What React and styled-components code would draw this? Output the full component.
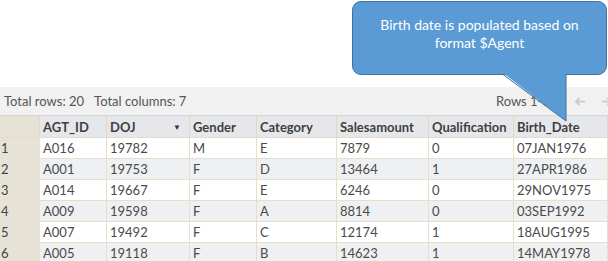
import React from 'react'
import styled, { createGlobalStyle } from 'styled-components'

const columns = [
  { key: 'id', label: 'AGT_ID', width: 67 },
  { key: 'doj', label: 'DOJ', width: 83, sorted: true },
  { key: 'gender', label: 'Gender', width: 67 },
  { key: 'cat', label: 'Category', width: 80 },
  { key: 'sales', label: 'Salesamount', width: 92 },
  { key: 'qual', label: 'Qualification', width: 85 },
  { key: 'birth', label: 'Birth_Date', width: 94 },
]

const rows = [
  ['A016', '19782', 'M', 'E', '7879', '0', '07JAN1976'],
  ['A001', '19753', 'F', 'D', '13464', '1', '27APR1986'],
  ['A014', '19667', 'F', 'E', '6246', '0', '29NOV1975'],
  ['A009', '19598', 'F', 'A', '8814', '0', '03SEP1992'],
  ['A007', '19492', 'F', 'C', '12174', '1', '18AUG1995'],
  ['A005', '19118', 'F', 'B', '14623', '1', '14MAY1978'],
]

const GlobalStyle = createGlobalStyle`
  body {
    margin: 0;
    background: #fff;
    font-family: Lato, "Open Sans", sans-serif;
  }
`

const App = () => {
  return (
    <Page>
      <GlobalStyle />
      <Spacer />
      <Toolbar>
        <Totals>
          <span>Total rows: 20</span>
          <span>Total columns: 7</span>
        </Totals>
        <Pager>
          <PagerLabel>Rows 1-6</PagerLabel>
          <ArrowIcon viewBox="0 0 12 10">
            <path d="M5 1 L1 5 L5 9 M1 5 H11" fill="none" stroke="#c9cdd2" strokeWidth="2.2" />
          </ArrowIcon>
          <ArrowIcon viewBox="0 0 12 10">
            <path d="M7 1 L11 5 L7 9 M11 5 H1" fill="none" stroke="#c9cdd2" strokeWidth="2.2" />
          </ArrowIcon>
        </Pager>
      </Toolbar>
      <Grid>
        <HeadCell $corner />
        {columns.map((c) => (
          <HeadCell key={c.key}>
            {c.label}
            {c.sorted && <SortMark>▼</SortMark>}
          </HeadCell>
        ))}
        {rows.map((r, i) => (
          <React.Fragment key={i}>
            <RowNum>{i + 1}</RowNum>
            {r.map((v, j) => (
              <Cell key={j} $odd={i % 2 === 1}>{v}</Cell>
            ))}
          </React.Fragment>
        ))}
      </Grid>
      <Callout>
        <CalloutBox>
          Birth date is populated based on
          <br />
          format $Agent
        </CalloutBox>
        <Tail width="68" height="52" viewBox="0 0 68 52">
          <polygon points="2,0 65,48 65,0" fill="#5b9bd5" />
          <polyline points="2,1.5 65,48 65,1.5" fill="none" stroke="#41719c" strokeWidth="1" />
        </Tail>
      </Callout>
    </Page>
  )
}

const Page = styled.div`
  position: relative;
  width: 608px;
  height: 261px;
  overflow: hidden;
  background: #fff;
  color: #444;
`

const Spacer = styled.div`
  height: 87px;
`

const Toolbar = styled.div`
  height: 28px;
  background: #f1f1f1;
  display: flex;
  align-items: center;
  justify-content: space-between;
  padding: 0 0 0 4px;
  font-size: 13px;
  color: #555;
`

const Totals = styled.div`
  display: flex;
  gap: 10px;
`

const Pager = styled.div`
  display: flex;
  align-items: center;
  gap: 15px;
  margin-right: -4px;
`

const PagerLabel = styled.span`
  margin-right: 10px;
`

const ArrowIcon = styled.svg`
  width: 11px;
  height: 9px;
`

const Grid = styled.div`
  display: grid;
  grid-template-columns: 40px ${columns.map((c) => c.width + 'px').join(' ')};
  grid-auto-rows: 21px;
  grid-template-rows: 22px;
  border-top: 1px solid #d6d6d6;
  font-size: 13px;
`

const HeadCell = styled.div`
  position: relative;
  display: flex;
  align-items: center;
  padding-left: 3px;
  font-weight: 700;
  color: #3f3f3f;
  background: ${(p) => (p.$corner ? '#e6e3d6' : '#e5e7ea')};
  border-right: 1px solid #ddd8c8;
  border-bottom: 1px solid #e2dccb;
`

const SortMark = styled.span`
  position: absolute;
  right: 8px;
  top: 6px;
  font-size: 8px;
  color: #333;
`

const RowNum = styled.div`
  display: flex;
  align-items: center;
  padding-left: 1px;
  background: #e6e3d6;
  border-bottom: 1px solid #e6e3d6;
  color: #444;
`

const Cell = styled.div`
  display: flex;
  align-items: center;
  padding-left: 3px;
  white-space: nowrap;
  color: #4a4a4a;
  background: ${(p) => (p.$odd ? '#eef0f2' : '#fff')};
  border-right: 1px solid #e6dfcc;
  border-bottom: 1px solid #e6dfcc;
`

const Callout = styled.div`
  position: absolute;
  left: 352px;
  top: 1px;
  width: 255px;
`

const CalloutBox = styled.div`
  position: relative;
  box-sizing: border-box;
  height: 74px;
  padding-top: 14px;
  background: #5b9bd5;
  border: 1px solid #41719c;
  border-radius: 9px;
  color: #fff;
  text-align: center;
  font-size: 14px;
  line-height: 18px;
`

const Tail = styled.svg`
  position: absolute;
  left: 149px;
  top: 72px;
  display: block;
`

export default App
